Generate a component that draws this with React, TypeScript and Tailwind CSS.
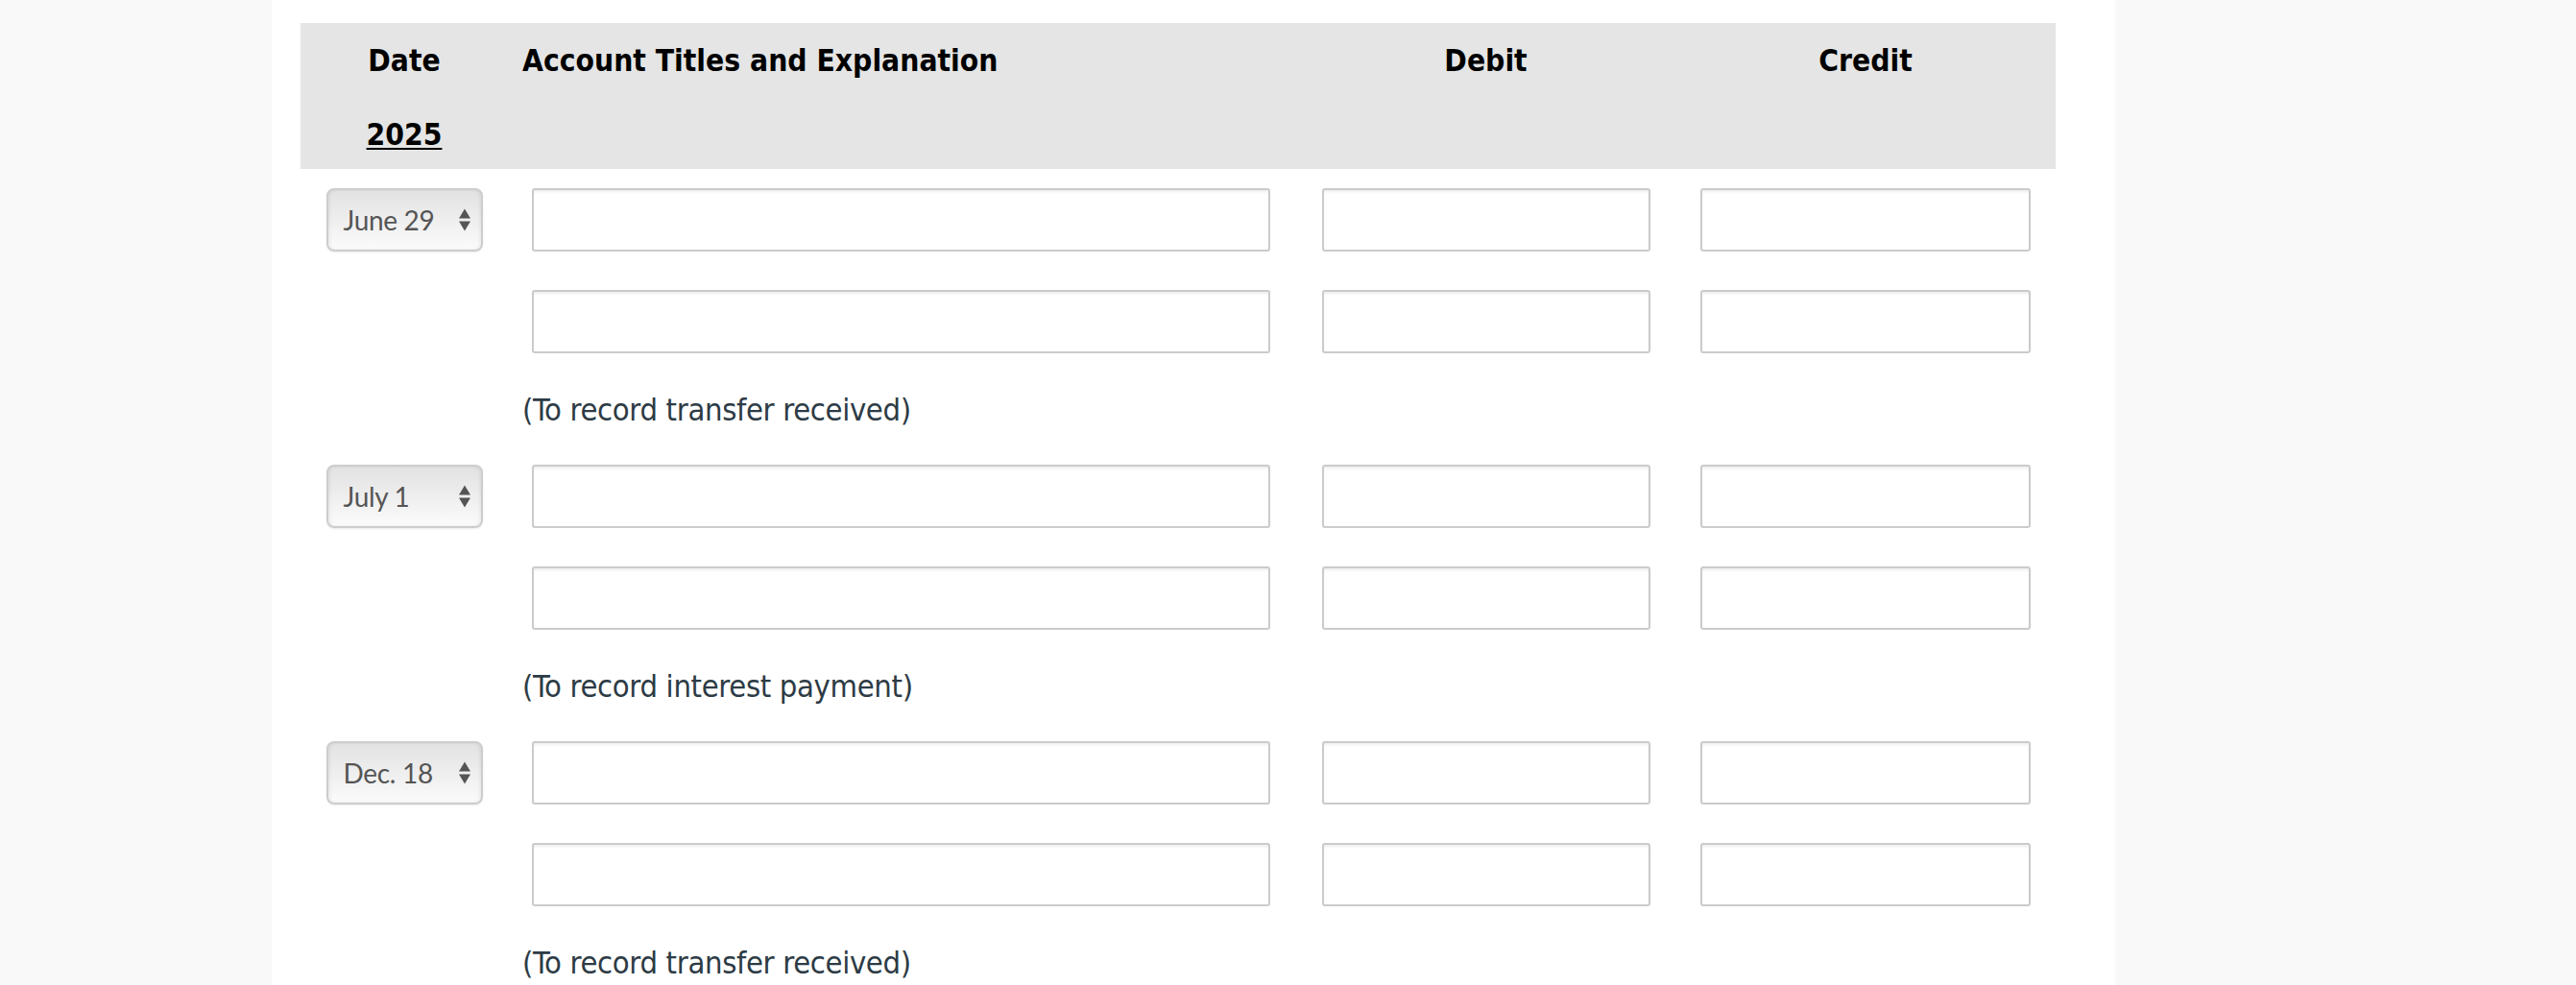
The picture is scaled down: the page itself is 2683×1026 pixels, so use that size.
import React from "react";

const groups = [
  { date: "June 29", note: "(To record transfer received)" },
  { date: "July 1", note: "(To record interest payment)" },
  { date: "Dec. 18", note: "(To record transfer received)" },
];

function Arrows() {
  return (
    <svg width="12" height="24" viewBox="0 0 12 24" className="shrink-0">
      <polygon points="6,0.5 12,10.5 0,10.5" fill="#555" />
      <polygon points="0,13.5 12,13.5 6,23.5" fill="#555" />
    </svg>
  );
}

function DateSelect({ label }: { label: string }) {
  return (
    <div className="w-[163px] h-[66px] rounded-[8px] border-2 border-[#cdcdcd] bg-gradient-to-b from-[#e2e2e2] to-[#fbfbfb] shadow-[inset_2px_0_3px_rgba(0,0,0,0.05),inset_-2px_0_3px_rgba(0,0,0,0.05),0_1px_2px_rgba(0,0,0,0.08)] flex items-center pl-[16px] pr-[11px] justify-between">
      <span className="font-['Lato',sans-serif] text-[28px] text-[#555] tracking-[-0.3px]">{label}</span>
      <Arrows />
    </div>
  );
}

function InputRow({ date }: { date?: string }) {
  return (
    <div className="flex h-[66px]">
      <div className="w-[216px] flex justify-center">{date ? <DateSelect label={date} /> : null}</div>
      <div className="w-[821px] pl-[25px]">
        <div className="w-[769px] h-[66px] rounded-[3px] border-2 border-[#cbcbcb] bg-white shadow-[inset_0_3px_3px_-1px_rgba(0,0,0,0.07)]" />
      </div>
      <div className="w-[395px] flex justify-center">
        <div className="w-[342px] h-[66px] rounded-[3px] border-2 border-[#cbcbcb] bg-white shadow-[inset_0_3px_3px_-1px_rgba(0,0,0,0.07)]" />
      </div>
      <div className="w-[396px] flex justify-center">
        <div className="w-[344px] h-[66px] rounded-[3px] border-2 border-[#cbcbcb] bg-white shadow-[inset_0_3px_3px_-1px_rgba(0,0,0,0.07)]" />
      </div>
    </div>
  );
}

export default function App() {
  return (
    <div className="min-h-[1026px] w-[2683px] bg-[#f9f9f9] overflow-hidden">
      <div className="ml-[283px] w-[1920px] min-h-[1026px] bg-white pt-[24px] pl-[30px] pr-[62px]">
        <div className="flex h-[152px] bg-[#e5e5e5] text-black font-bold text-[31.5px] font-['DejaVu_Sans_Condensed','DejaVu_Sans',sans-serif] font-stretch-condensed">
          <div className="w-[216px] flex flex-col items-center pt-[19px]">
            <div className="h-[40px] leading-[40px]">Date</div>
            <div className="h-[40px] leading-[40px] mt-[37px] underline decoration-2 underline-offset-[3px]">2025</div>
          </div>
          <div className="w-[821px] pt-[19px] pl-[15px]">
            <div className="h-[40px] leading-[40px]">Account Titles and Explanation</div>
          </div>
          <div className="w-[395px] pt-[19px] text-center">
            <div className="h-[40px] leading-[40px]">Debit</div>
          </div>
          <div className="w-[396px] pt-[19px] text-center">
            <div className="h-[40px] leading-[40px]">Credit</div>
          </div>
        </div>
        <div className="pt-[20px]">
          {groups.map((g, i) => (
            <div key={i} className="flex flex-col">
              <InputRow date={g.date} />
              <div className="h-[40px]" />
              <InputRow />
              <div className="h-[116px] flex items-center pl-[231px] pt-[3px]">
                <span className="font-['DejaVu_Sans_Condensed','DejaVu_Sans',sans-serif] font-stretch-condensed text-[32.5px] tracking-[-0.35px] text-[#2d3b45]">
                  {g.note}
                </span>
              </div>
            </div>
          ))}
        </div>
      </div>
    </div>
  );
}
